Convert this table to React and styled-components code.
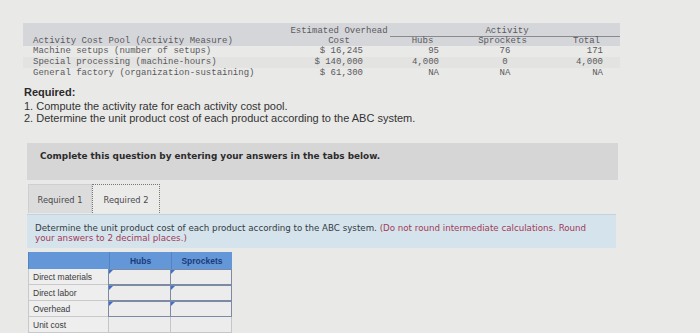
import React from "react";
import styled, { createGlobalStyle } from "styled-components";

const GlobalStyle = createGlobalStyle`
  html, body { margin: 0; padding: 0; }
  body {
    background: #e9e9e8;
    width: 700px;
    height: 333px;
    overflow: hidden;
  }
`;

const COLS = "265px 102px 55px 115px 60px";

const Page = styled.div`
  padding-top: 23px;
  display: flex;
  flex-direction: column;
`;

const CostTable = styled.div`
  margin-left: 23px;
  width: 597px;
  display: flex;
  flex-direction: column;
  font-family: "Liberation Mono", "DejaVu Sans Mono", monospace;
  font-size: 9px;
  color: #5a5a5c;
`;

const HeadBand = styled.div`
  display: grid;
  grid-template-columns: ${COLS};
  grid-auto-rows: 9.5px;
  padding-top: 4px;
  background: #d5d6da;
  line-height: 9.5px;
`;

const DataRow = styled.div`
  display: grid;
  grid-template-columns: ${COLS};
  height: 11px;
  line-height: 11px;
  background: ${(p) => (p.$striped ? "rgba(0,0,0,0.025)" : "transparent")};
`;

const Cell = styled.div`
  white-space: pre;
  text-align: ${(p) => p.$align || "left"};
  padding-left: ${(p) => p.$pl || 0}px;
  padding-right: ${(p) => p.$pr || 0}px;
  grid-column: ${(p) => p.$span || "auto"};
`;

const SpanHead = styled(Cell)`
  border-bottom: 1px solid #8a8a8e;
  text-align: center;
  padding-left: 4px;
  height: 8.5px;
`;

const Required = styled.div`
  margin: 7px 0 0 24px;
  font-family: "Liberation Sans", Arial, sans-serif;
  color: #333;
`;

const ReqTitle = styled.div`
  font-weight: bold;
  font-size: 11px;
  line-height: 13px;
  margin-bottom: 2px;
  color: #2a2a2a;
`;

const ReqLine = styled.div`
  font-size: 11px;
  line-height: 11.5px;
`;

const Instruction = styled.div`
  margin: 19px 0 0 27px;
  width: 591px;
  height: 37px;
  box-sizing: border-box;
  background: #d6d6d6;
  padding: 8px 0 0 13px;
  font-family: "DejaVu Sans", Verdana, sans-serif;
  font-weight: bold;
  font-size: 8.9px;
  line-height: 10px;
  color: #2c2c2c;
`;

const Tabs = styled.div`
  display: flex;
  margin: 4px 0 0 28px;
  height: 29px;
`;

const Tab = styled.div`
  box-sizing: border-box;
  width: ${(p) => p.$w}px;
  display: flex;
  align-items: center;
  justify-content: center;
  padding-top: 2px;
  font-family: "DejaVu Sans", Verdana, sans-serif;
  font-size: 8.3px;
  color: #4a4a4a;
  background: ${(p) => (p.$active ? "#ebebea" : "#dcdcdc")};
  border: ${(p) => (p.$active ? "1px dotted #777" : "1px solid #cfcfcf")};
  border-bottom: none;
`;

const InfoBox = styled.div`
  margin: 1px 0 0 27px;
  width: 589px;
  box-sizing: border-box;
  background: #d4e3ec;
  border-top: 1px solid #c3d3de;
  padding: 9px 8px 5px 8px;
  font-family: "DejaVu Sans", Verdana, sans-serif;
  font-size: 8.7px;
  line-height: 9.5px;
  color: #353a40;
`;

const Note = styled.span`
  color: #a33a55;
`;

const AnswerTable = styled.div`
  margin: 4px 0 0 28px;
  width: 204px;
  display: grid;
  grid-template-columns: 81px 62px 61px;
  grid-template-rows: 17px repeat(4, 16px);
  font-family: "Liberation Sans", Arial, sans-serif;
  font-size: 8.5px;
`;

const HeadCell = styled.div`
  background: #6497d8;
  color: #1b3b78;
  font-weight: bold;
  display: flex;
  align-items: center;
  justify-content: center;
  border-left: 1px solid #5283c4;
`;

const LabelCell = styled.div`
  box-sizing: border-box;
  background: #eeeeee;
  border: 1px solid #c9c9c9;
  border-top: none;
  color: #3a3a3a;
  display: flex;
  align-items: center;
  padding-left: 4px;
`;

const InputCell = styled.div`
  position: relative;
  box-sizing: border-box;
  background: #ececec;
  border: ${(p) => (p.$plain ? "1px solid #c6c6c8" : "1.5px solid #7d8aa3")};
  border-top: ${(p) => (p.$plain ? "none" : "1.5px solid #7d8aa3")};
  margin-left: -1px;
  ${(p) =>
    p.$plain
      ? ""
      : `&::before {
    content: "";
    position: absolute;
    left: 0;
    top: 0;
    border-top: 4px solid #3d6fcc;
    border-right: 4px solid transparent;
  }`}
`;

const costRows = [
  { label: "Machine setups (number of setups)", cost: "$ 16,245", hubs: "95", spr: "76", total: "171" },
  { label: "Special processing (machine-hours)", cost: "$ 140,000", hubs: "4,000", spr: "0", total: "4,000" },
  { label: "General factory (organization-sustaining)", cost: "$ 61,300", hubs: "NA", spr: "NA", total: "NA" },
];

const answerRows = ["Direct materials", "Direct labor", "Overhead", "Unit cost"];

export default function App() {
  return (
    <>
      <GlobalStyle />
      <Page>
        <CostTable>
          <HeadBand>
            <Cell />
            <Cell $align="center">Estimated Overhead</Cell>
            <SpanHead $span="3 / 6">Activity</SpanHead>
            <Cell $pl={10}>Activity Cost Pool (Activity Measure)</Cell>
            <Cell $align="center">Cost</Cell>
            <Cell $align="center" $pl={10}>Hubs</Cell>
            <Cell $align="center">Sprockets</Cell>
            <Cell $align="right" $pr={20}>Total</Cell>
          </HeadBand>
          {costRows.map((r, i) => (
            <DataRow key={r.label} $striped={i === 1}>
              <Cell $pl={10}>{r.label}</Cell>
              <Cell $align="right" $pr={27}>{r.cost}</Cell>
              <Cell $align="right" $pr={6}>{r.hubs}</Cell>
              <Cell $align="center" $pl={5}>{r.spr}</Cell>
              <Cell $align="right" $pr={17}>{r.total}</Cell>
            </DataRow>
          ))}
        </CostTable>

        <Required>
          <ReqTitle>Required:</ReqTitle>
          <ReqLine>1. Compute the activity rate for each activity cost pool.</ReqLine>
          <ReqLine>2. Determine the unit product cost of each product according to the ABC system.</ReqLine>
        </Required>

        <Instruction>Complete this question by entering your answers in the tabs below.</Instruction>

        <Tabs>
          <Tab $w={64}>Required 1</Tab>
          <Tab $w={68} $active>Required 2</Tab>
        </Tabs>

        <InfoBox>
          Determine the unit product cost of each product according to the ABC system.{" "}
          <Note>(Do not round intermediate calculations. Round your answers to 2 decimal places.)</Note>
        </InfoBox>

        <AnswerTable>
          <HeadCell />
          <HeadCell>Hubs</HeadCell>
          <HeadCell>Sprockets</HeadCell>
          {answerRows.map((label, i) => (
            <React.Fragment key={label}>
              <LabelCell>{label}</LabelCell>
              <InputCell $plain={i === 3} />
              <InputCell $plain={i === 3} />
            </React.Fragment>
          ))}
        </AnswerTable>
      </Page>
    </>
  );
}
